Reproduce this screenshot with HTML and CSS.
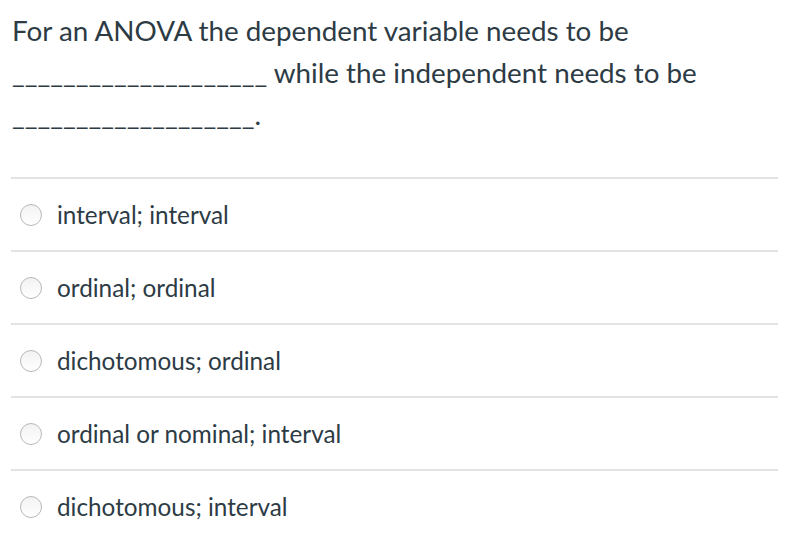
FILE: index.html
```html
<!DOCTYPE html>
<html>
<head>
<meta charset="utf-8">
<link rel="stylesheet" href="styles.css">
</head>
<body>
<div class="quiz">
  <div class="question">For an ANOVA the dependent variable needs to be ____________________ while the independent needs to be ___________________.</div>
  <ul class="answers">
    <li class="answer"><span class="radio"></span><span class="label">interval; interval</span></li>
    <li class="answer"><span class="radio"></span><span class="label">ordinal; ordinal</span></li>
    <li class="answer"><span class="radio"></span><span class="label">dichotomous; ordinal</span></li>
    <li class="answer"><span class="radio"></span><span class="label">ordinal or nominal; interval</span></li>
    <li class="answer"><span class="radio"></span><span class="label">dichotomous; interval</span></li>
  </ul>
</div>
</body>
</html>
```
FILE: styles.css
```css
html, body {
  margin: 0;
  padding: 0;
  background: #ffffff;
}
body {
  font-family: Lato, "Open Sans", sans-serif;
  color: #2d3b45;
}
.quiz {
  padding: 10px 12px 0 11px;
}
.question {
  font-size: 27.8px;
  line-height: 42px;
  width: 720px;
  padding-left: 1px;
  margin-bottom: 41px;
}
.answers {
  list-style: none;
  margin: 0;
  padding: 0;
}
.answer {
  display: flex;
  align-items: center;
  gap: 15px;
  height: 71px;
  border-top: 2px solid #e3e3e3;
  padding-left: 9px;
}
.radio {
  flex: none;
  width: 22px;
  height: 22px;
  border-radius: 50%;
  border: 1px solid #b8b8b8;
  background: linear-gradient(#f2f2f2, #ffffff);
  box-sizing: border-box;
}
.label {
  font-size: 24.3px;
}
```
